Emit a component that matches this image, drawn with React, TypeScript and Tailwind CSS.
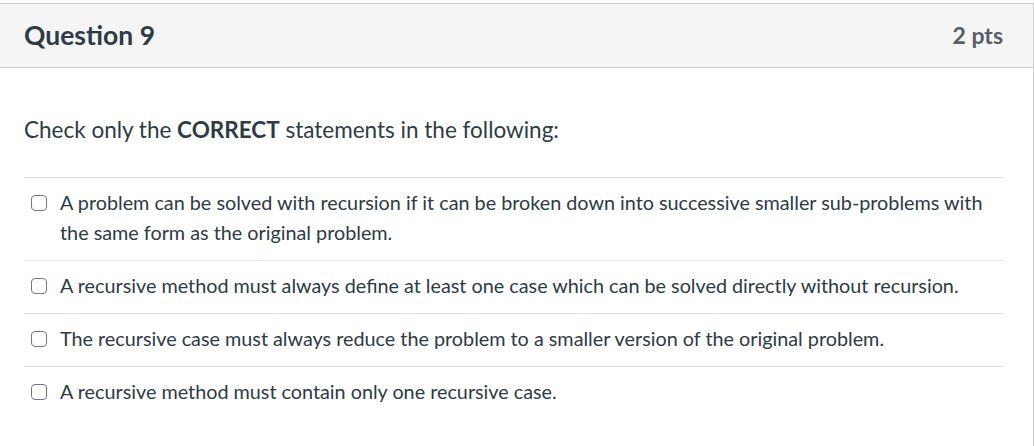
import React from "react";

const answers = [
  "A problem can be solved with recursion if it can be broken down into successive smaller sub-problems with the same form as the original problem.",
  "A recursive method must always define at least one case which can be solved directly without recursion.",
  "The recursive case must always reduce the problem to a smaller version of the original problem.",
  "A recursive method must contain only one recursive case.",
];

export default function App() {
  return (
    <div className="w-[1034px] h-[446px] bg-white pt-[3px] overflow-hidden" style={{ fontFamily: "Lato, 'Open Sans', sans-serif" }}>
      <div className="border-t border-r border-[#c7cdd1] h-[443px]">
        <div className="h-[64px] bg-[#f5f5f5] border-b border-[#c7cdd1] flex items-center justify-between pl-[24px] pr-[30px]">
          <h2 className="text-[26.5px] font-bold text-[#2d3b45] leading-none">Question 9</h2>
          <div className="text-[23px] font-bold text-[#555f66] leading-none">2 pts</div>
        </div>
        <div className="pl-[24px] pr-[29px]">
          <p className="text-[22.5px] text-[#2d3b45] mt-[48px] leading-[28px]">
            Check only the <strong className="font-bold">CORRECT</strong> statements in the following:
          </p>
          <div className="mt-[33px]">
            {answers.map((a, i) => (
              <div key={i} className="border-t border-[#e2e5e7] flex items-start pt-[9px] pb-[13px]">
                <div className="w-[36px] shrink-0 flex pl-[7px] pt-[8px]">
                  <div className="w-[16px] h-[16px] border-[1.5px] border-[#6f7980] rounded-[4px] bg-white" />
                </div>
                <div className="text-[19.8px] text-[#2d3b45] leading-[30px]">{a}</div>
              </div>
            ))}
          </div>
        </div>
      </div>
    </div>
  );
}
